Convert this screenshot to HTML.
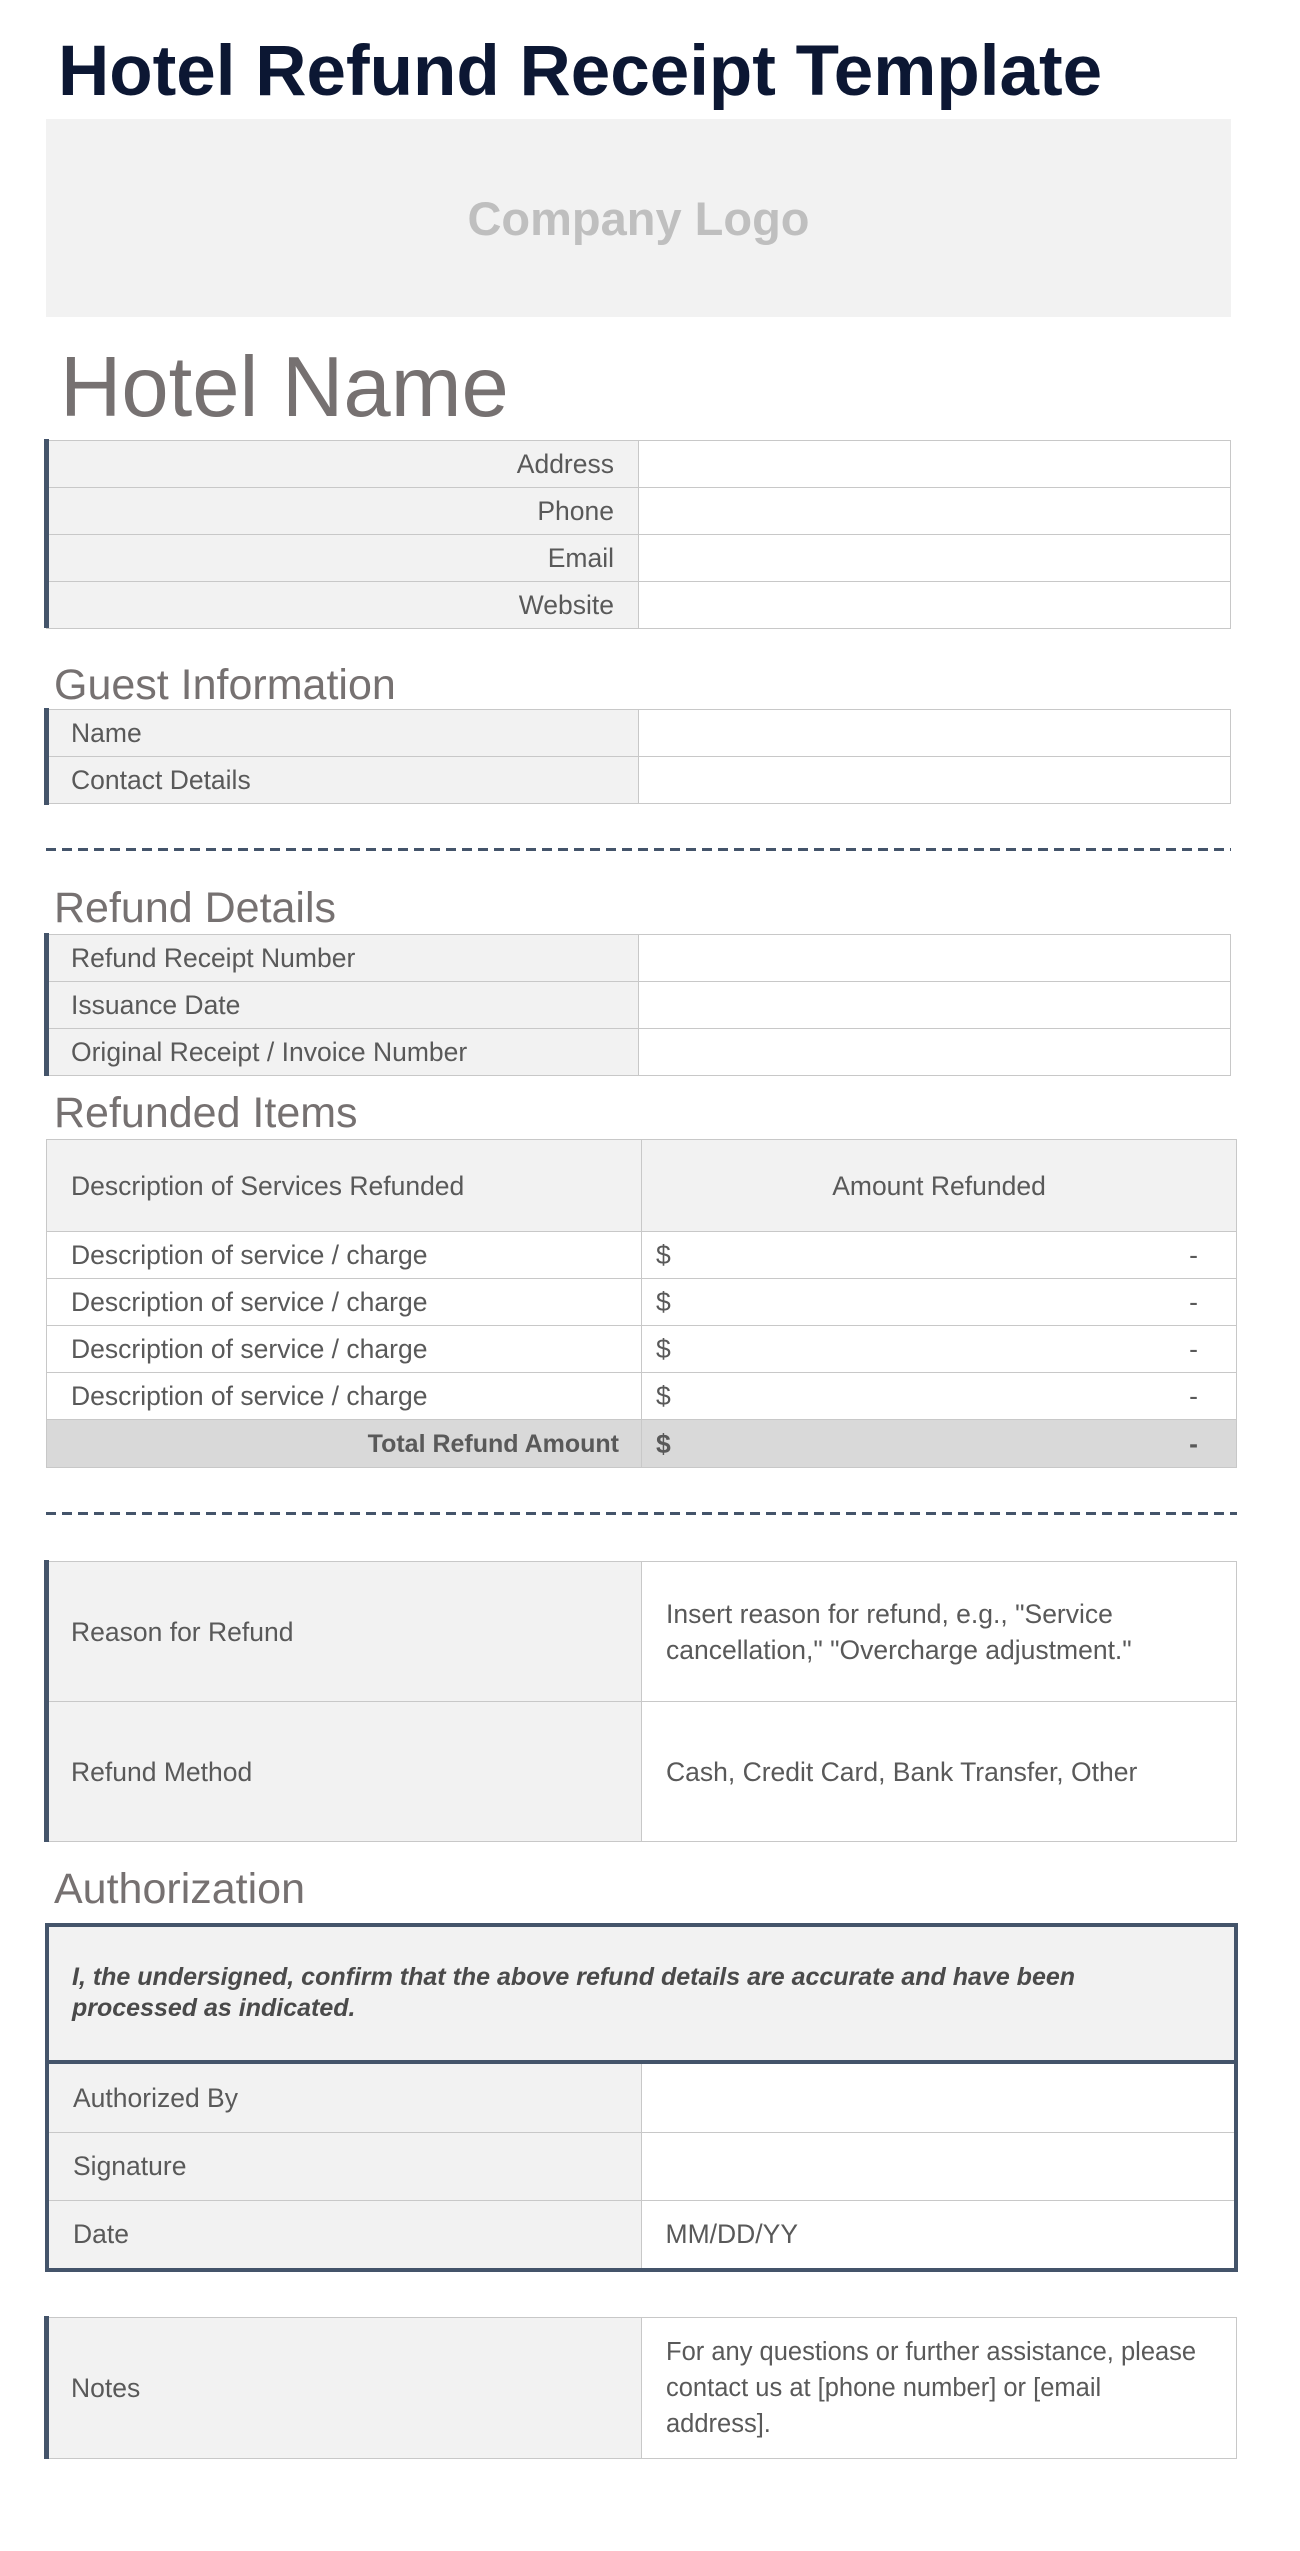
<!DOCTYPE html>
<html><head><meta charset="utf-8">
<style>
*{box-sizing:border-box;margin:0;padding:0}
html,body{width:1300px;height:2551px;background:#fff;overflow:hidden}
body{position:relative;font-family:"Liberation Sans",sans-serif;color:#595959}
.a{position:absolute}
.title{left:58px;top:32px;font-size:71px;font-weight:bold;color:#0c1733;line-height:80px;white-space:nowrap}
.logo{left:46px;top:119px;width:1185px;height:198px;background:#f2f2f2;display:flex;align-items:center;justify-content:center;font-size:47px;font-weight:bold;color:#bfbfbf}
.hname{left:60px;top:343px;font-size:85px;color:#767171;line-height:90px;white-space:nowrap}
.h2{font-size:43px;color:#767171;line-height:48px;white-space:nowrap}
table{position:absolute;border-collapse:collapse;table-layout:fixed}
td{border:1.5px solid #c8c8c8;font-size:26.5px;padding:0 0 0 24px;vertical-align:middle;line-height:36px;overflow:hidden;white-space:nowrap}
td.l{background:#f2f2f2}
td.r{background:#fff}
.bar{position:absolute;background:#44546a;width:5px}
.dash{position:absolute;left:46px;height:3px;background:repeating-linear-gradient(90deg,#44546a 0 10px,transparent 10px 16px)}
</style></head><body>
<div class="a title">Hotel Refund Receipt Template</div>
<div class="a logo">Company Logo</div>
<div class="a hname">Hotel Name</div>

<table style="left:46px;top:440px;width:1185px">
<colgroup><col style="width:592px"><col></colgroup>
<tr style="height:47px"><td class="l" style="text-align:right;padding:0 24px 0 0">Address</td><td class="r"></td></tr>
<tr style="height:47px"><td class="l" style="text-align:right;padding:0 24px 0 0">Phone</td><td class="r"></td></tr>
<tr style="height:47px"><td class="l" style="text-align:right;padding:0 24px 0 0">Email</td><td class="r"></td></tr>
<tr style="height:47px"><td class="l" style="text-align:right;padding:0 24px 0 0">Website</td><td class="r"></td></tr>
</table>
<div class="bar" style="left:44px;top:439px;height:189px"></div>

<div class="a h2" style="left:54px;top:661px">Guest Information</div>
<table style="left:46px;top:709px;width:1185px">
<colgroup><col style="width:592px"><col></colgroup>
<tr style="height:47px"><td class="l">Name</td><td class="r"></td></tr>
<tr style="height:47px"><td class="l">Contact Details</td><td class="r"></td></tr>
</table>
<div class="bar" style="left:44px;top:708px;height:97px"></div>

<div class="dash" style="top:848px;width:1185px"></div>

<div class="a h2" style="left:54px;top:884px">Refund Details</div>
<table style="left:46px;top:934px;width:1185px">
<colgroup><col style="width:592px"><col></colgroup>
<tr style="height:47px"><td class="l">Refund Receipt Number</td><td class="r"></td></tr>
<tr style="height:47px"><td class="l">Issuance Date</td><td class="r"></td></tr>
<tr style="height:47px"><td class="l">Original Receipt / Invoice Number</td><td class="r"></td></tr>
</table>
<div class="bar" style="left:44px;top:933px;height:143px"></div>

<div class="a h2" style="left:54px;top:1089px">Refunded Items</div>
<table style="left:46px;top:1139px;width:1191px">
<colgroup><col style="width:595px"><col></colgroup>
<tr style="height:92px"><td class="l">Description of Services Refunded</td><td class="l" style="text-align:center;padding:0">Amount Refunded</td></tr>
<tr style="height:47px"><td class="r">Description of service / charge</td><td class="r" style="padding:0 38px 0 14px">$<span style="float:right">-</span></td></tr>
<tr style="height:47px"><td class="r">Description of service / charge</td><td class="r" style="padding:0 38px 0 14px">$<span style="float:right">-</span></td></tr>
<tr style="height:47px"><td class="r">Description of service / charge</td><td class="r" style="padding:0 38px 0 14px">$<span style="float:right">-</span></td></tr>
<tr style="height:47px"><td class="r">Description of service / charge</td><td class="r" style="padding:0 38px 0 14px">$<span style="float:right">-</span></td></tr>
<tr style="height:48px;background:#d9d9d9;font-weight:bold"><td style="text-align:right;padding:0 22px 0 0;font-weight:bold;font-size:25px">Total Refund Amount</td><td style="padding:0 38px 0 14px;font-weight:bold">$<span style="float:right">-</span></td></tr>
</table>

<div class="dash" style="top:1512px;width:1191px"></div>

<table style="left:46px;top:1561px;width:1191px">
<colgroup><col style="width:595px"><col></colgroup>
<tr style="height:140px"><td class="l">Reason for Refund</td><td class="r">Insert reason for refund, e.g., "Service<br>cancellation," "Overcharge adjustment."</td></tr>
<tr style="height:140px"><td class="l">Refund Method</td><td class="r">Cash, Credit Card, Bank Transfer, Other</td></tr>
</table>
<div class="bar" style="left:44px;top:1560px;height:282px"></div>

<div class="a h2" style="left:54px;top:1865px">Authorization</div>
<div class="a" style="left:45px;top:1923px;width:1193px;height:349px;border:4px solid #44546a;background:#fff">
 <div style="height:137px;background:#f2f2f2;border-bottom:4px solid #44546a;padding:35px 0 0 23px;font-size:25px;line-height:31px;font-weight:bold;font-style:italic;color:#4a4a4a">I, the undersigned, confirm that the above refund details are accurate and have been<br>processed as indicated.</div>
 <table style="position:static;width:1185px">
 <colgroup><col style="width:592px"><col></colgroup>
 <tr style="height:68px"><td class="l" style="border-left:none;border-top:none">Authorized By</td><td class="r" style="border-right:none;border-top:none"></td></tr>
 <tr style="height:68px"><td class="l" style="border-left:none">Signature</td><td class="r" style="border-right:none"></td></tr>
 <tr style="height:68px"><td class="l" style="border-left:none;border-bottom:none">Date</td><td class="r" style="border-right:none;border-bottom:none">MM/DD/YY</td></tr>
 </table>
</div>

<table style="left:46px;top:2317px;width:1191px">
<colgroup><col style="width:595px"><col></colgroup>
<tr style="height:141px"><td class="l">Notes</td><td class="r" style="font-size:25.5px">For any questions or further assistance, please<br>contact us at [phone number] or [email<br>address].</td></tr>
</table>
<div class="bar" style="left:44px;top:2316px;height:143px"></div>
</body></html>
